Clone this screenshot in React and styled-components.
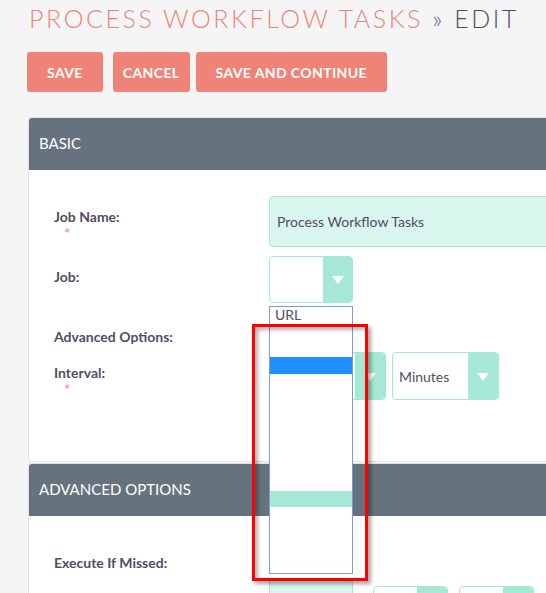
import React from "react";
import styled, { createGlobalStyle } from "styled-components";

const Global = createGlobalStyle`
  html, body { margin: 0; padding: 0; }
  body {
    background: #f5f5f5;
    font-family: Lato, "Open Sans", "Liberation Sans", sans-serif;
    color: #534d64;
    overflow: hidden;
    width: 546px;
    height: 593px;
  }
  * { box-sizing: border-box; }
`;

const Page = styled.div`
  position: relative;
  width: 620px;
  height: 593px;
  padding-left: 28px;
`;

const Title = styled.h1`
  margin: 3px 0 0 1px;
  height: 30px;
  font-size: 25px;
  line-height: 30px;
  font-weight: 300;
  letter-spacing: 2.55px;
  text-transform: uppercase;
  white-space: nowrap;
  color: #f08377;
`;

const Sep = styled.span`
  color: #4a5a8a;
`;

const TitleEnd = styled.span`
  color: #534d64;
`;

const Toolbar = styled.div`
  display: flex;
  margin-top: 19px;
  margin-left: -1px;
`;

const Button = styled.button`
  height: 40px;
  padding: 0 ${(p) => (p.$compact ? "10px" : "20px")};
  margin-left: ${(p) => p.$gap || 0}px;
  border: none;
  border-radius: 3px;
  background: #f08377;
  color: #fff;
  font-family: Lato, "Open Sans", sans-serif;
  font-weight: 700;
  font-size: 14px;
  letter-spacing: 0.4px;
  text-transform: uppercase;
  cursor: pointer;
`;

const Panel = styled.section`
  margin-top: ${(p) => p.$top || 0}px;
  background: #fff;
  border: 1px solid #e2e2e2;
  border-right: none;
  border-radius: 4px 0 0 4px;
  overflow: hidden;
`;

const PanelHeader = styled.div`
  height: 52px;
  display: flex;
  align-items: center;
  padding: 0 0 3px 10px;
  background: #66727d;
  color: #fff;
  font-size: 15px;
  font-weight: 400;
  text-transform: uppercase;
`;

const PanelBody = styled.div`
  display: flex;
  flex-direction: column;
  gap: 9px;
  padding: 26px 0 ${(p) => p.$bottom || 0}px 25px;
`;

const Row = styled.div`
  display: flex;
  align-items: flex-start;
  height: ${(p) => p.$h}px;
`;

const Label = styled.div`
  width: 215px;
  flex: none;
  padding-top: 13px;
  font-size: 14px;
  line-height: 16px;
  font-weight: 700;
  color: #534d64;
`;

const Required = styled.span`
  display: block;
  margin-top: 3px;
  padding-left: 10px;
  font-size: 15px;
  line-height: 10px;
  font-weight: 400;
  color: #f08377;
`;

const Fields = styled.div`
  display: flex;
  align-items: flex-start;
  gap: ${(p) => p.$gap || 6}px;
  flex: 1;
`;

const TextInput = styled.div`
  flex: ${(p) => (p.$w ? "none" : 1)};
  width: ${(p) => (p.$w ? `${p.$w}px` : "auto")};
  height: ${(p) => p.$h || 51}px;
  display: flex;
  align-items: center;
  padding-left: 7px;
  background: #d8f5ee;
  border: 1px solid #a5e8d6;
  border-radius: 4px;
  font-size: 14px;
  color: #534d64;
`;

const Select = styled.div`
  display: flex;
  flex: none;
  width: ${(p) => p.$w}px;
  height: ${(p) => p.$h || 48}px;
  margin-top: ${(p) => p.$top || 0}px;
  margin-left: ${(p) => p.$ml || 0}px;
  border: 1px solid #a5e8d6;
  border-radius: 4px;
  overflow: hidden;
  background: #fff;
`;

const SelectValue = styled.div`
  flex: 1;
  display: flex;
  align-items: center;
  padding-left: 6px;
  font-size: 14px;
  color: #534d64;
`;

const SelectArrow = styled.div`
  width: ${(p) => p.$w || 30}px;
  flex: none;
  display: flex;
  align-items: center;
  justify-content: center;
  background: #a5e8d6;
  &::after {
    content: "";
    border-left: 6.5px solid transparent;
    border-right: 6.5px solid transparent;
    border-top: 8px solid #fff;
    margin-top: 1px;
  }
`;

const OptionList = styled.ul`
  position: absolute;
  left: 269px;
  top: 303px;
  width: 84px;
  height: 268px;
  margin: 0;
  padding: 0;
  list-style: none;
  background: #fff;
  border: 1px solid #7f9bd0;
  overflow: hidden;
`;

const Option = styled.li`
  height: 16.7px;
  padding-left: 5px;
  font-size: 14px;
  line-height: 15px;
  color: #534d64;
  background: ${(p) =>
    p.$state === "active" ? "#1e90ff" : p.$state === "hover" ? "#a5e8d6" : "#fff"};
`;

const Highlight = styled.div`
  position: absolute;
  left: 252px;
  top: 321px;
  width: 116px;
  height: 257px;
  border: 3px solid #f00;
  box-shadow: 3px 3px 4px rgba(0, 0, 0, 0.35), inset 3px 3px 4px rgba(0, 0, 0, 0.3);
  pointer-events: none;
`;

const options = Array.from({ length: 16 }, (_, i) => ({
  label: i === 0 ? "URL" : "",
  state: i === 3 ? "active" : i === 11 ? "hover" : "",
}));

export default function App() {
  return (
    <>
      <Global />
      <Page>
        <Title>
          Process Workflow Tasks <Sep>»</Sep> <TitleEnd>Edit</TitleEnd>
        </Title>
        <Toolbar>
          <Button>Save</Button>
          <Button $compact $gap={10}>Cancel</Button>
          <Button $gap={6}>Save and Continue</Button>
        </Toolbar>

        <Panel $top={25}>
          <PanelHeader>Basic</PanelHeader>
          <PanelBody $bottom={61}>
            <Row $h={51}>
              <Label>
                Job Name:
                <Required>*</Required>
              </Label>
              <Fields>
                <TextInput>Process Workflow Tasks</TextInput>
              </Fields>
            </Row>
            <Row $h={51}>
              <Label>Job:</Label>
              <Fields>
                <Select $w={84} $h={47}>
                  <SelectValue />
                  <SelectArrow $w={29} />
                </Select>
              </Fields>
            </Row>
            <Row $h={27}>
              <Label>Advanced Options:</Label>
            </Row>
            <Row $h={48}>
              <Label>
                Interval:
                <Required>*</Required>
              </Label>
              <Fields>
                <Select $w={117}>
                  <SelectValue />
                  <SelectArrow />
                </Select>
                <Select $w={107}>
                  <SelectValue>Minutes</SelectValue>
                  <SelectArrow />
                </Select>
              </Fields>
            </Row>
          </PanelBody>
        </Panel>

        <Panel $top={1}>
          <PanelHeader>Advanced Options</PanelHeader>
          <PanelBody $bottom={20}>
            <Row $h={27}>
              <Label>Execute If Missed:</Label>
            </Row>
            <Row $h={48}>
              <Label />
              <Fields $gap={20}>
                <TextInput $w={84} $h={48} />
                <Select $w={75} $top={8}>
                  <SelectValue />
                  <SelectArrow />
                </Select>
                <Select $w={75} $top={8} $ml={-9}>
                  <SelectValue />
                  <SelectArrow />
                </Select>
              </Fields>
            </Row>
          </PanelBody>
        </Panel>

        <OptionList>
          {options.map((o, i) => (
            <Option key={i} $state={o.state}>
              {o.label}
            </Option>
          ))}
        </OptionList>
        <Highlight />
      </Page>
    </>
  );
}
